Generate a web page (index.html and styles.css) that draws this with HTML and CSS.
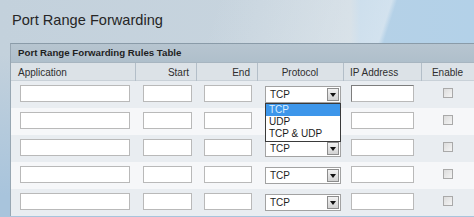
FILE: index.html
```html
<!DOCTYPE html>
<html>
<head>
<meta charset="utf-8">
<link rel="stylesheet" href="styles.css">
</head>
<body>
<div class="title">Port Range Forwarding</div>
<div class="panel">
  <div class="panel-head">Port Range Forwarding Rules Table</div>
  <table class="rules">
    <thead>
      <tr>
        <th class="c-app">Application</th>
        <th class="c-start">Start</th>
        <th class="c-end">End</th>
        <th class="c-proto">Protocol</th>
        <th class="c-ip">IP Address</th>
        <th class="c-en">Enable</th>
      </tr>
    </thead>
    <tbody>
      <tr class="odd">
        <td class="c-app"><span class="field w-app"></span></td>
        <td class="c-start"><span class="field w-port"></span></td>
        <td class="c-end"><span class="field w-port2"></span></td>
        <td class="c-proto">
          <div class="select-wrap">
            <div class="select"><span class="sel-text">TCP</span><span class="sel-btn"><span class="tri"></span></span></div>
            <ul class="dropdown">
              <li class="active">TCP</li>
              <li>UDP</li>
              <li>TCP &amp; UDP</li>
            </ul>
          </div>
        </td>
        <td class="c-ip"><span class="field w-ip focus"></span></td>
        <td class="c-en"><span class="check"></span></td>
      </tr>
      <tr class="even">
        <td class="c-app"><span class="field w-app"></span></td>
        <td class="c-start"><span class="field w-port"></span></td>
        <td class="c-end"><span class="field w-port2"></span></td>
        <td class="c-proto"><div class="select"><span class="sel-text">TCP</span><span class="sel-btn"><span class="tri"></span></span></div></td>
        <td class="c-ip"><span class="field w-ip"></span></td>
        <td class="c-en"><span class="check"></span></td>
      </tr>
      <tr class="odd">
        <td class="c-app"><span class="field w-app"></span></td>
        <td class="c-start"><span class="field w-port"></span></td>
        <td class="c-end"><span class="field w-port2"></span></td>
        <td class="c-proto"><div class="select"><span class="sel-text">TCP</span><span class="sel-btn"><span class="tri"></span></span></div></td>
        <td class="c-ip"><span class="field w-ip"></span></td>
        <td class="c-en"><span class="check"></span></td>
      </tr>
      <tr class="even">
        <td class="c-app"><span class="field w-app"></span></td>
        <td class="c-start"><span class="field w-port"></span></td>
        <td class="c-end"><span class="field w-port2"></span></td>
        <td class="c-proto"><div class="select"><span class="sel-text">TCP</span><span class="sel-btn"><span class="tri"></span></span></div></td>
        <td class="c-ip"><span class="field w-ip"></span></td>
        <td class="c-en"><span class="check"></span></td>
      </tr>
      <tr class="odd">
        <td class="c-app"><span class="field w-app"></span></td>
        <td class="c-start"><span class="field w-port"></span></td>
        <td class="c-end"><span class="field w-port2"></span></td>
        <td class="c-proto"><div class="select"><span class="sel-text">TCP</span><span class="sel-btn"><span class="tri"></span></span></div></td>
        <td class="c-ip"><span class="field w-ip"></span></td>
        <td class="c-en"><span class="check"></span></td>
      </tr>
    </tbody>
  </table>
</div>
</body>
</html>
```
FILE: styles.css
```css
html, body {
  margin: 0;
  padding: 0;
}
body {
  width: 474px;
  height: 217px;
  overflow: hidden;
  font-family: "Liberation Sans", Arial, sans-serif;
  color: #2a2a2a;
  background:
    linear-gradient(180deg, rgba(168,196,220,0) 25%, rgba(168,196,220,1) 90%),
    linear-gradient(108deg, rgba(255,255,255,0) 40%, rgba(235,240,244,0.55) 72%, rgba(255,255,255,0) 73%),
    linear-gradient(90deg, #c3d1dc 0%, #c7d4de 55%, #c9d6df 74%, #b5d1e7 76%, #b3d1e8 100%);
}
.title {
  height: 43px;
  box-sizing: border-box;
  padding: 12px 0 0 12px;
  font-size: 14.6px;
  line-height: 17px;
  color: #262626;
}
.panel {
  margin-left: 10px;
  border-left: 1px solid #97a6b2;
  border-top: 1px solid #8a9ba8;
  background: #eef1f4;
}
.panel-head {
  height: 18px;
  line-height: 18px;
  padding-left: 7px;
  font-size: 9.7px;
  font-weight: bold;
  color: #1f1f1f;
  background: linear-gradient(#b7c5d0, #afbfcb);
  border-bottom: 1px solid #a7b5c0;
}
.rules {
  border-collapse: separate;
  border-spacing: 0;
  width: 463px;
  table-layout: fixed;
}
.rules th {
  height: 18px;
  padding: 0 7px;
  font-size: 10px;
  font-weight: normal;
  color: #2e2e2e;
  background: #dce2e7;
  box-shadow: inset 1px 0 #b3bec8, inset 0 -1px #c9d1d8;
  white-space: nowrap;
}
.rules th:first-child { box-shadow: inset 0 -1px #c9d1d8; }
.rules th.c-app { text-align: left; width: 110px; }
.rules th.c-start { text-align: right; width: 47px; }
.rules th.c-end { text-align: right; width: 47px; }
.rules th.c-proto { text-align: center; width: 72px; }
.rules th.c-ip { text-align: left; width: 64px; }
.rules th.c-en { text-align: center; padding: 0; }

.rules td {
  height: 27px;
  box-sizing: border-box;
  padding: 4px 0 0 8px;
  vertical-align: top;
}
.rules td.c-app { padding-left: 9px; }
.rules td.c-en { padding-left: 22px; padding-top: 7px; }
tr.odd td { background: #e9edf1; }
tr.even td { background: #f6f7f9; }

.field {
  display: block;
  height: 17px;
  box-sizing: border-box;
  background: #fff;
  border: 1px solid #b9b9b9;
}
.field.focus {
  border-top-color: #7d7d7d;
  border-left-color: #7d7d7d;
}
.w-app { width: 110px; }
.w-port { width: 49px; }
.w-port2 { width: 48px; }
.w-ip { width: 63px; }

.check {
  display: block;
  width: 10px;
  height: 10px;
  box-sizing: border-box;
  border: 1px solid #a9a9a9;
  background: linear-gradient(135deg, #dcdcdc, #f4f4f4);
}

.select-wrap { position: relative; }
.select {
  display: flex;
  align-items: center;
  width: 76px;
  height: 17px;
  box-sizing: border-box;
  margin-top: 1px;
  border: 1px solid #a2a2a2;
  background: #fff;
}
.sel-text {
  flex: 1;
  padding-left: 4px;
  font-size: 10px;
  color: #1e1e1e;
}
.sel-btn {
  display: flex;
  align-items: center;
  justify-content: center;
  width: 12px;
  height: 13px;
  margin-right: 1px;
  box-sizing: border-box;
  border: 1px solid #8c8c8c;
  background: linear-gradient(#f2f2f2, #d2d2d2);
}
.tri {
  width: 0;
  height: 0;
  border-left: 3px solid transparent;
  border-right: 3px solid transparent;
  border-top: 4px solid #111;
}
.dropdown {
  position: absolute;
  left: 0;
  top: 17px;
  width: 76px;
  box-sizing: border-box;
  margin: 0;
  padding: 0 0 1px;
  list-style: none;
  background: #fff;
  border: 1px solid #3a3a3a;
  z-index: 5;
  font-size: 10px;
}
.dropdown li {
  height: 12px;
  line-height: 12px;
  padding-left: 3px;
  color: #1a1a1a;
}
.dropdown li.active {
  background: #3d96ea;
  color: #dceeff;
}
```
